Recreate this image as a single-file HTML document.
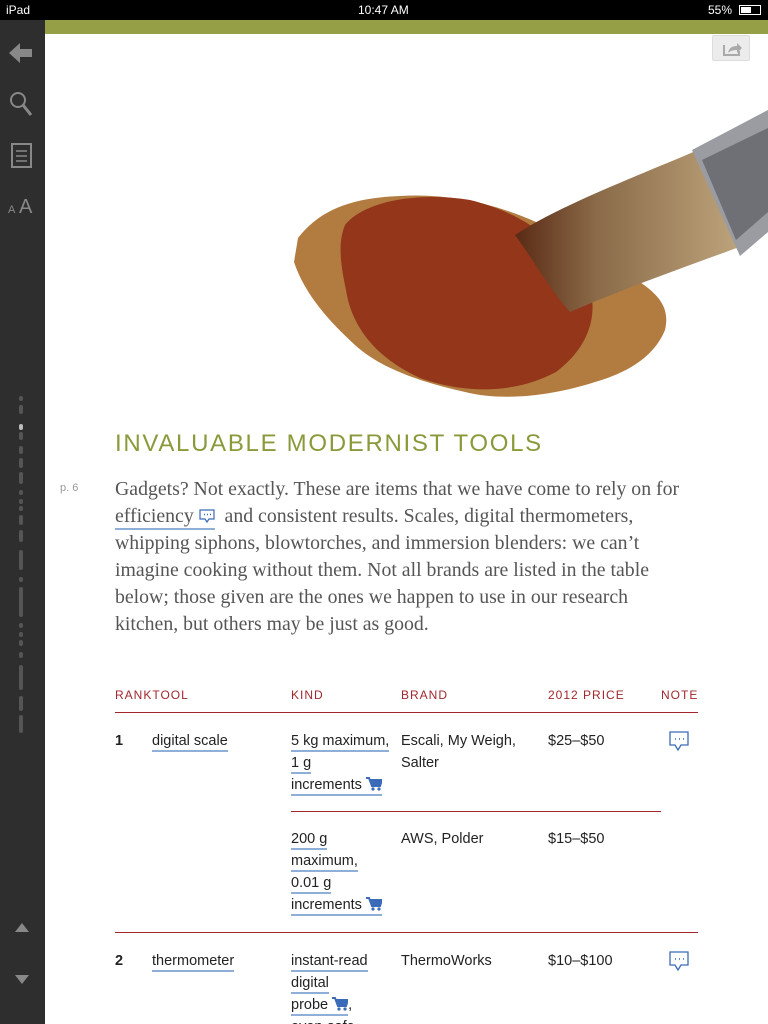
<!DOCTYPE html>
<html><head><meta charset="utf-8"><style>
*{margin:0;padding:0;box-sizing:border-box}
html,body{width:768px;height:1024px;overflow:hidden}
body{background:#fff;position:relative;font-family:"Liberation Sans",sans-serif}
.abs{position:absolute}
.status{left:0;top:0;width:768px;height:20px;background:#000;color:#fff;font-size:12px}
.side{left:0;top:20px;width:45px;height:1004px;background:#2e2e2e}
.green{left:45px;top:20px;width:723px;height:14px;background:#959f45}
.body{left:115px;top:476px;width:580px;font-family:"Liberation Serif",serif;font-size:19.8px;line-height:27px;color:#555}
h1{position:absolute;left:115px;top:430px;font-family:"Liberation Sans",sans-serif;font-weight:normal;font-size:24px;letter-spacing:1.7px;color:#8a9a3b}
.th{position:absolute;top:688px;font-size:12px;letter-spacing:1px;color:#a0282d}
.td{position:absolute;font-size:14.5px;line-height:22px;color:#222}
.u{border-bottom:2px solid #8fb0d6;padding-bottom:1px}
.line{position:absolute;height:1px;background:#a0282d}
.dot{position:absolute;left:19px;width:4px;background:#555;border-radius:2px}
.cart{display:inline-block;vertical-align:-2px}
</style></head><body>
<div class="abs status"><span class="abs" style="left:6px;top:3px">iPad</span><span class="abs" style="left:358px;top:3px">10:47 AM</span><span class="abs" style="left:708px;top:3px">55%</span><span class="abs" style="left:739px;top:5px;width:22px;height:10px;border:1px solid #fff"><span class="abs" style="left:1px;top:1px;width:10px;height:6px;background:#fff"></span></span></div>
<div class="abs side">
<svg width="45" height="220" style="position:absolute;left:0;top:0">
<path d="M9 33 L20 23 L20 29 L32 29 L32 37 L20 37 L20 43 Z" fill="#888"/>
<circle cx="18" cy="80" r="7" fill="none" stroke="#888" stroke-width="2"/><path d="M23 85 L31 95" stroke="#888" stroke-width="3"/>
<rect x="12" y="124" width="19" height="23" fill="none" stroke="#888" stroke-width="2"/><path d="M16 131h11M16 136h11M16 141h11" stroke="#888" stroke-width="1.5"/>
<text x="8" y="193" fill="#888" font-size="11" font-family="Liberation Sans">A</text><text x="19" y="193" fill="#888" font-size="20" font-family="Liberation Sans">A</text>
</svg>
<div class="dot" style="top:376px;height:5px"></div><div class="dot" style="top:385px;height:9px"></div><div class="dot" style="top:404px;height:6px;background:#bbb"></div><div class="dot" style="top:412px;height:8px"></div>
<div class="dot" style="top:426px;height:8px"></div><div class="dot" style="top:438px;height:10px"></div><div class="dot" style="top:452px;height:12px"></div><div class="dot" style="top:470px;height:5px"></div><div class="dot" style="top:479px;height:5px"></div><div class="dot" style="top:486px;height:5px"></div><div class="dot" style="top:495px;height:10px"></div><div class="dot" style="top:510px;height:12px"></div><div class="dot" style="top:530px;height:20px"></div><div class="dot" style="top:557px;height:5px"></div><div class="dot" style="top:567px;height:30px"></div><div class="dot" style="top:603px;height:5px"></div><div class="dot" style="top:612px;height:5px"></div><div class="dot" style="top:620px;height:6px"></div><div class="dot" style="top:632px;height:6px"></div><div class="dot" style="top:645px;height:25px"></div><div class="dot" style="top:676px;height:15px"></div><div class="dot" style="top:695px;height:18px"></div>
<svg width="45" height="80" style="position:absolute;left:0;top:898px"><path d="M15 14 L22 5 L29 14Z" fill="#888"/><path d="M15 57 L22 66 L29 57Z" fill="#888"/></svg>
</div>
<div class="abs green"></div>
<div class="abs" style="left:712px;top:35px;width:38px;height:26px;background:#ececec;border:1px solid #ddd;border-radius:2px"><svg width="38" height="26"><path d="M11 9v10h15v-4" fill="none" stroke="#aaa" stroke-width="2"/><path d="M15 17c1-5 4-7 9-7v-3l5 5-5 5v-3c-4 0-7 1-9 3z" fill="#aaa"/></svg></div>
<svg class="abs" style="left:0;top:0" width="768" height="420">
<defs><linearGradient id="br" x1="0" y1="0" x2="1" y2="0"><stop offset="0" stop-color="#5a2a14"/><stop offset="0.35" stop-color="#8a6a48"/><stop offset="1" stop-color="#bfa67e"/></linearGradient></defs>
<path d="M298 238 C320 210 350 198 400 196 C470 192 540 215 600 260 C650 285 672 300 665 330 C655 355 630 372 595 382 C555 395 505 402 465 392 C420 382 380 368 355 345 C330 322 305 295 294 262 Z" fill="#b27c40"/>
<path d="M345 225 C365 200 420 192 470 200 C520 212 560 240 588 282 C600 315 588 348 556 372 C515 394 465 394 420 378 C380 360 352 330 346 290 C340 262 338 242 345 225Z" fill="#93361a"/>
<path d="M515 235 C560 205 640 175 698 150 L745 245 C690 265 620 290 570 312 C550 290 535 262 515 235Z" fill="url(#br)"/>
<path d="M692 150 L768 110 L768 232 L740 256 Z" fill="#9a9ca1"/>
<path d="M702 160 L768 128 L768 212 L736 240Z" fill="#6e7075"/>
</svg>
<h1>INVALUABLE MODERNIST TOOLS</h1>
<div class="abs" style="left:60px;top:482px;font-size:11px;color:#999">p. 6</div>
<div class="abs body">Gadgets? Not exactly. These are items that we have come to rely on for <span class="u">efficiency <svg width="16" height="16" style="vertical-align:-2px"><path d="M1 2h14v9h-5l-2 3-2-3H1z" fill="none" stroke="#3a6ab8" stroke-width="1.2"/><path d="M5 6.5h1M8 6.5h1M11 6.5h1" stroke="#3a6ab8" stroke-width="1.4"/></svg></span>&nbsp; and consistent results. Scales, digital thermometers, whipping siphons, blowtorches, and immersion blenders: we can’t imagine cooking without them. Not all brands are listed in the table below; those given are the ones we happen to use in our research kitchen, but others may be just as good.</div>
<div class="th" style="left:115px">RANKTOOL</div><div class="th" style="left:291px">KIND</div><div class="th" style="left:401px">BRAND</div><div class="th" style="left:548px">2012 PRICE</div><div class="th" style="left:661px">NOTE</div>
<div class="line" style="left:115px;top:712px;width:583px"></div>
<div class="td" style="left:115px;top:730px;font-weight:bold">1</div>
<div class="td" style="left:152px;top:730px"><span class="u">digital scale</span></div>
<div class="td" style="left:291px;top:730px;width:108px"><span class="u">5 kg maximum,</span><br><span class="u">1 g</span><br><span class="u">increments <svg class="cart" width="16" height="14"><path d="M0 1h3l3 8h8l2-6H4" fill="none" stroke="#3a6ab8" stroke-width="2"/><path d="M5 4h10l-2 5H7z" fill="#3a6ab8"/><circle cx="7" cy="12" r="1.6" fill="#3a6ab8"/><circle cx="13" cy="12" r="1.6" fill="#3a6ab8"/></svg></span></div>
<div class="td" style="left:401px;top:730px;width:140px">Escali, My Weigh, Salter</div>
<div class="td" style="left:548px;top:730px">$25–$50</div>
<svg class="abs" style="left:668px;top:730px" width="24" height="24"><path d="M2 2h18v13h-7l-3 5-3-5H2z" fill="none" stroke="#3a6ab8" stroke-width="1.3"/><path d="M7 9h1M11 9h1M15 9h1" stroke="#3a6ab8" stroke-width="1.6"/></svg>
<div class="line" style="left:291px;top:811px;width:370px"></div>
<div class="td" style="left:291px;top:828px;width:108px"><span class="u">200 g</span><br><span class="u">maximum,</span><br><span class="u">0.01 g</span><br><span class="u">increments <svg class="cart" width="16" height="14"><path d="M0 1h3l3 8h8l2-6H4" fill="none" stroke="#3a6ab8" stroke-width="2"/><path d="M5 4h10l-2 5H7z" fill="#3a6ab8"/><circle cx="7" cy="12" r="1.6" fill="#3a6ab8"/><circle cx="13" cy="12" r="1.6" fill="#3a6ab8"/></svg></span></div>
<div class="td" style="left:401px;top:828px">AWS, Polder</div>
<div class="td" style="left:548px;top:828px">$15–$50</div>
<div class="line" style="left:115px;top:932px;width:583px"></div>
<div class="td" style="left:115px;top:950px;font-weight:bold">2</div>
<div class="td" style="left:152px;top:950px"><span class="u">thermometer</span></div>
<div class="td" style="left:291px;top:950px;width:108px"><span class="u">instant-read</span><br><span class="u">digital</span><br><span class="u">probe <svg class="cart" width="16" height="14"><path d="M0 1h3l3 8h8l2-6H4" fill="none" stroke="#3a6ab8" stroke-width="2"/><path d="M5 4h10l-2 5H7z" fill="#3a6ab8"/><circle cx="7" cy="12" r="1.6" fill="#3a6ab8"/><circle cx="13" cy="12" r="1.6" fill="#3a6ab8"/></svg></span>,<br>oven-safe</div>
<div class="td" style="left:401px;top:950px">ThermoWorks</div>
<div class="td" style="left:548px;top:950px">$10–$100</div>
<svg class="abs" style="left:668px;top:950px" width="24" height="24"><path d="M2 2h18v13h-7l-3 5-3-5H2z" fill="none" stroke="#3a6ab8" stroke-width="1.3"/><path d="M7 9h1M11 9h1M15 9h1" stroke="#3a6ab8" stroke-width="1.6"/></svg>
</body></html>
